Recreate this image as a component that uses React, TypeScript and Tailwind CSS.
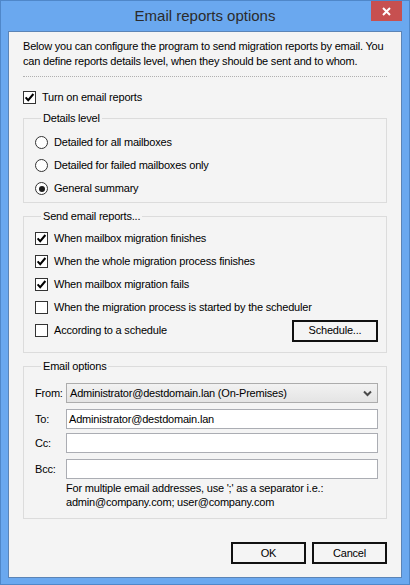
import React from "react";

const font = { fontFamily: '"Liberation Sans", Arial, sans-serif' };

const CheckBox: React.FC<{ checked?: boolean }> = ({ checked }) => (
  <span className="flex h-[13px] w-[13px] shrink-0 items-center justify-center border border-[#333333] bg-white">
    {checked && (
      <svg width="11" height="11" viewBox="0 0 11 11">
        <path d="M1.6 5.4 L4.2 8.2 L9.4 2" fill="none" stroke="#000" strokeWidth="2" />
      </svg>
    )}
  </span>
);

const Radio: React.FC<{ checked?: boolean }> = ({ checked }) => (
  <span className="flex h-[13px] w-[13px] shrink-0 items-center justify-center rounded-full border border-[#333333] bg-white">
    {checked && <span className="h-[6px] w-[6px] rounded-full bg-[#1c1c1c]" />}
  </span>
);

const Row: React.FC<{ children: React.ReactNode }> = ({ children }) => (
  <div className="flex h-[23px] items-center gap-[6px]">{children}</div>
);

const Group: React.FC<{ title: string; className?: string; children: React.ReactNode }> = ({
  title,
  className,
  children,
}) => (
  <fieldset className={`border border-[#dcdcdc] pl-[11px] pr-[8px] ${className ?? ""}`}>
    <legend className="ml-[6px] px-[2px] leading-[15px]">{title}</legend>
    {children}
  </fieldset>
);

const Field: React.FC<{ label: string; value?: string; className?: string }> = ({
  label,
  value,
  className,
}) => (
  <div className={`flex items-center ${className ?? ""}`}>
    <span className="w-[31px]">{label}</span>
    <div className="flex h-[20px] flex-1 items-center border border-[#abadb3] bg-white pl-[2px]">
      {value}
    </div>
  </div>
);

const Button: React.FC<{ label: string; className?: string }> = ({ label, className }) => (
  <div
    className={`flex h-[22px] items-center justify-center border-2 border-[#111111] bg-[#f4f4f4] ${className ?? ""}`}
  >
    {label}
  </div>
);

export default function App() {
  return (
    <div
      className="flex h-[585px] w-[410px] flex-col border border-[#4f87c9] bg-[#6aa8ef] px-[7px] pb-[6px] text-[11px] tracking-[-0.2px] text-black"
      style={font}
    >
      {/* title bar */}
      <div className="relative flex h-[30px] shrink-0 items-center justify-center">
        <span className="text-[15px] tracking-normal text-[#2b2b2b]">Email reports options</span>
        <div className="absolute right-0 top-0 flex h-[20px] w-[31px] items-center justify-center bg-[#c75050]">
          <svg width="9" height="9" viewBox="0 0 9 9">
            <path d="M1 1 L8 8 M8 1 L1 8" stroke="#fff" strokeWidth="2" />
          </svg>
        </div>
      </div>

      {/* client area */}
      <div className="flex flex-1 flex-col border border-[#5b84b6] bg-[#f4f4f4] px-[14px] pt-[7px]">
        <p className="leading-[15px]">
          Below you can configure the program to send migration reports by email. You
          <br />
          can define reports details level, when they should be sent and to whom.
        </p>
        <div className="mt-[7px] border-t border-dotted border-[#b0b0b0]" />

        <div className="mt-[12px] flex h-[17px] items-center gap-[6px]">
          <CheckBox checked />
          <span>Turn on email reports</span>
        </div>

        <Group title="Details level" className="mt-[5px] pb-[2px]">
          <div className="pt-[5px]">
            <Row>
              <Radio />
              <span>Detailed for all mailboxes</span>
            </Row>
            <Row>
              <Radio />
              <span>Detailed for failed mailboxes only</span>
            </Row>
            <Row>
              <Radio checked />
              <span>General summary</span>
            </Row>
          </div>
        </Group>

        <Group title="Send email reports..." className="mt-[6px] pb-[10px]">
          <div className="pt-[3px]">
            <Row>
              <CheckBox checked />
              <span>When mailbox migration finishes</span>
            </Row>
            <Row>
              <CheckBox checked />
              <span>When the whole migration process finishes</span>
            </Row>
            <Row>
              <CheckBox checked />
              <span>When mailbox migration fails</span>
            </Row>
            <Row>
              <CheckBox />
              <span>When the migration process is started by the scheduler</span>
            </Row>
            <Row>
              <CheckBox />
              <span>According to a schedule</span>
              <Button label="Schedule..." className="ml-auto w-[86px]" />
            </Row>
          </div>
        </Group>

        <Group title="Email options" className="mt-[6px] pb-[9px]">
          <div className="flex items-center pt-[9px]">
            <span className="w-[31px]">From:</span>
            <div className="flex h-[20px] flex-1 items-center justify-between border border-[#acacac] bg-gradient-to-b from-[#f2f2f2] to-[#e4e4e4] pl-[3px] pr-[5px]">
              <span>Administrator@destdomain.lan (On-Premises)</span>
              <svg width="9" height="7" viewBox="0 0 9 7">
                <path d="M1 1.5 L4.5 5 L8 1.5" fill="none" stroke="#4a4a4a" strokeWidth="2" />
              </svg>
            </div>
          </div>
          <Field label="To:" value="Administrator@destdomain.lan" className="mt-[6px]" />
          <Field label="Cc:" className="mt-[4px]" />
          <Field label="Bcc:" className="mt-[6px]" />
          <p className="mt-[2px] pl-[31px] leading-[14px]">
            For multiple email addresses, use ';' as a separator i.e.:
            <br />
            admin@company.com; user@company.com
          </p>
        </Group>

        <div className="mt-[23px] flex justify-end gap-[6px]">
          <Button label="OK" className="w-[75px]" />
          <Button label="Cancel" className="w-[75px]" />
        </div>
      </div>
    </div>
  );
}
